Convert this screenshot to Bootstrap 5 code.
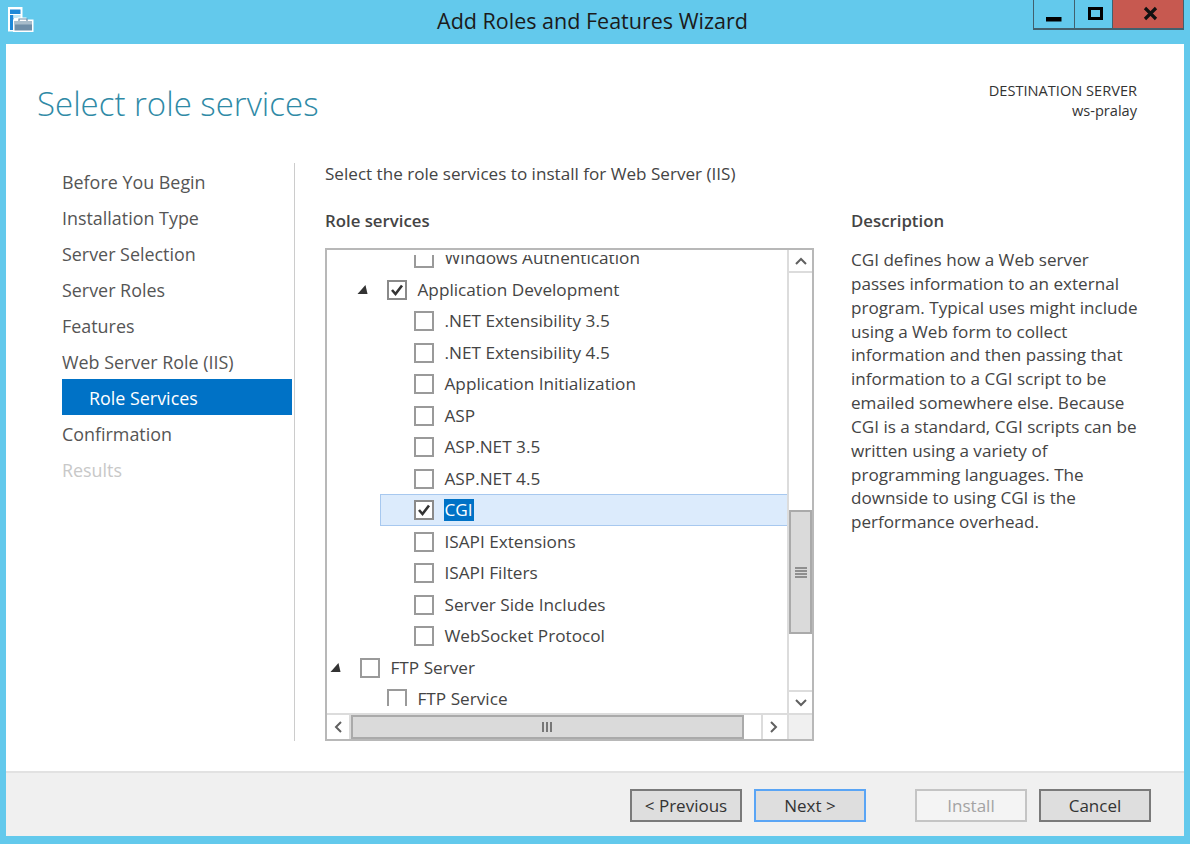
<!DOCTYPE html>
<html lang="en">
<head>
<meta charset="utf-8">
<title>Add Roles and Features Wizard</title>
<link href="https://cdn.jsdelivr.net/npm/bootstrap@5.3.0/dist/css/bootstrap.min.css" rel="stylesheet">
<style>
html,body{height:844px;overflow:hidden}
body{background:#63c9ec;font-family:"Open Sans","Noto Sans","Liberation Sans",sans-serif;font-size:17px;color:#444;}
.wiz{width:1190px;height:844px;padding:0 6px 8px}
.tbar{height:44px;margin:0 -6px;padding-left:8px}
.ticon{width:26px;height:26px;margin-top:7px;flex:none}
.ttl{flex:1;padding-left:118px;text-align:center;font-size:21.5px;color:#1b1b1b;line-height:42px}
.wctl{width:151px;height:30px;margin-right:6px;border:solid #41606e;border-width:0 1px 2px 1px;flex:none}
.wb{display:flex;align-items:center;justify-content:center;height:100%;background:transparent}
.wmin{width:41px;border-right:1px solid #41606e;padding-top:3px}
.wmax{width:38px;border-right:1px solid #41606e;padding-left:5px}
.wcls{flex:1;background:#c75950;padding-left:6px}
.panel{height:792px;background:#fff}
.phead{height:119px;padding:0 47px 0 31px}
.ptitle{font-size:33px;font-weight:300;color:#2f8aa6;margin:41px 0 0;line-height:38px}
.dest{font-size:14.6px;line-height:20px;color:#333;text-align:right;padding-top:36px}
.pbody{height:578px}
.side{width:289px;height:578px;border-right:1px solid #ccc;padding:0 2px 0 56px;flex:none}
.sitem{height:36px;line-height:39px;color:#555;font-size:17.9px;padding:0;white-space:nowrap}
.sitem.on{background:#0072c6;color:#fff;padding-left:27px;line-height:38px}
.sitem.off{color:#c8c8c8}
.mainc{padding-left:30px;flex:1}
.intro{line-height:22px;color:#444;font-size:17.1px;white-space:nowrap}
.hd{font-size:16.8px;font-weight:600;color:#444;line-height:22px;margin:25px 0 16px}
.tcol{width:489px;flex:none}
.tree{height:493px;border:2px solid #b8b8b8;display:grid;grid-template-columns:460px 1fr;grid-template-rows:1fr 26px}
.tvwrap{padding:5px 0 7px;overflow:hidden;min-height:0}
.tview{height:100%;overflow:hidden}
.trows{margin-top:-12.750px}
.trow{height:31.5px;display:flex;align-items:center;white-space:nowrap;color:#444;font-size:17.2px}
.l1{padding-left:33px}.l2{padding-left:60px}.l3{padding-left:87px}
.arrow{width:0;height:0;border-left:5px solid transparent;border-right:5px solid transparent;border-bottom:9px solid #333;margin-left:-28px;margin-right:18px;transform:skewX(-18deg);flex:none}
.form-check-input.tchk{width:20px;height:20px;margin:0 10.500px 0 0;border:2px solid #9a9a9a;border-radius:0;background-color:#fff;flex:none;opacity:1}
.form-check-input.tchk:checked{background-color:#fff;border-color:#8a8a8a;background-image:url("data:image/svg+xml,%3csvg xmlns='http://www.w3.org/2000/svg' viewBox='0 0 16 16'%3e%3cpath fill='none' stroke='%23333' stroke-width='2.6' d='M3 8 6.500 12 13 3.500'/%3e%3c/svg%3e");background-size:100% 100%}
.trow.sel{margin-left:53px;padding-left:33px;height:31.5px;background:#dcebfc;border:solid #a7c8ef;border-width:1px 0 1px 1px}
.seltx{background:#0072c6;color:#fff;padding:0 1px;margin-left:-1px;line-height:22px}
.vsb{border-left:2px solid #dcdcdc;display:flex;flex-direction:column;background:#fff}
.sbtn{display:flex;align-items:center;justify-content:center;background:#fff;flex:none}
.vsb .sbtn{height:23px}
.vup{border-bottom:2px solid #dcdcdc}
.vdn{border-top:2px solid #dcdcdc}
.vtrk{flex:1;padding-top:237px;min-height:0}
.vthumb{height:124px;background:#dadada;border:2px solid #aaa;display:flex;align-items:center;justify-content:center}
.hsb{border-top:2px solid #dcdcdc;display:flex;background:#fff;height:26px;padding-right:2px}
.hsb .sbtn{width:24px}
.hl{border-right:2px solid #dcdcdc}
.hr{border-left:2px solid #dcdcdc}
.htrk{flex:1;min-width:0;display:flex}
.hthumb{width:393px;background:#dadada;border:2px solid #aaa;display:flex;align-items:center;justify-content:center}
.corner{background:#f0f0f0;border-top:2px solid #dcdcdc;border-left:2px solid #dcdcdc}
.dcol{padding-left:37px}
.desc{line-height:23.850px;color:#444;font-size:17.100px;white-space:nowrap}
.foot{height:65px;background:#f0f0f0;border-top:2px solid #e2e2e2;margin-top:30px;padding:16px 33px 0 0}
.wbtn{width:112px;height:33px;padding:0;border-radius:0;border:2px solid #7a7a7a;background:#dedede;color:#333;font-size:17px;line-height:28px}
.wbtn:hover{background:#dedede;border-color:#7a7a7a;color:#333}
.wbtn.nx{border-color:#5aa5f5;margin-left:12px;margin-right:49px}
.wbtn.nx:hover{border-color:#5aa5f5}
.wbtn.ins,.wbtn.ins:disabled{background:#f4f4f4;border-color:#c4c4c4;color:#a3a3a3;opacity:1;margin-right:12px}
</style>
</head>
<body>
<div class="wiz d-flex flex-column">
  <div class="tbar d-flex">
    <svg class="ticon" viewBox="0 0 26 26">
      <path d="M0 0h14.500v24.500H0z" fill="#fff"/>
      <path d="M2 2.500h10.500v4.500H2z" fill="#1e88d8"/>
      <path d="M2 8h3.500v15H2z" fill="#1e88d8"/>
      <path d="M5.500 8h7v3h-7z" fill="#bfe6f6"/>
      <path d="M5 12.500h4.500v-2h9v2H25.500V25H5z" fill="#fff"/>
      <path d="M6.500 14h17.500v9.500H6.500z" fill="#6f8ea8"/>
      <path d="M6.500 14h17.500v3.500H6.500z" fill="#a8bccb"/>
      <path d="M11 14v-2h8v2" fill="none" stroke="#6f8ea8" stroke-width="1.200"/>
    </svg>
    <div class="ttl">Add Roles and Features Wizard</div>
    <div class="wctl d-flex">
      <div class="wb wmin"><svg width="16" height="16" viewBox="0 0 16 16"><path d="M0 9h15.500v4.500H0z" fill="#000"/></svg></div>
      <div class="wb wmax"><svg width="16" height="16" viewBox="0 0 16 16"><path d="M1.500 2.500h12v10h-12z" fill="none" stroke="#000" stroke-width="3"/></svg></div>
      <div class="wb wcls"><svg width="16" height="16" viewBox="0 0 16 16"><path d="M2 2l11 11M13 2 2 13" fill="none" stroke="#111" stroke-width="3.200"/></svg></div>
    </div>
  </div>
  <div class="panel d-flex flex-column">
    <div class="phead d-flex justify-content-between">
      <h1 class="ptitle">Select role services</h1>
      <div class="dest">DESTINATION SERVER<br>ws-pralay</div>
    </div>
    <div class="pbody d-flex">
      <nav class="side">
        <div class="sitem">Before You Begin</div>
        <div class="sitem">Installation Type</div>
        <div class="sitem">Server Selection</div>
        <div class="sitem">Server Roles</div>
        <div class="sitem">Features</div>
        <div class="sitem">Web Server Role (IIS)</div>
        <div class="sitem on">Role Services</div>
        <div class="sitem">Confirmation</div>
        <div class="sitem off">Results</div>
      </nav>
      <div class="mainc">
        <div class="intro">Select the role services to install for Web Server (IIS)</div>
        <div class="d-flex gap-0">
          <div class="tcol">
            <div class="hd">Role services</div>
            <div class="tree">
              <div class="tvwrap"><div class="tview"><div class="trows">
                <div class="trow l3"><input class="form-check-input tchk" type="checkbox">Windows Authentication</div>
                <div class="trow l2"><span class="arrow"></span><input class="form-check-input tchk" type="checkbox" checked>Application Development</div>
                <div class="trow l3"><input class="form-check-input tchk" type="checkbox">.NET Extensibility 3.5</div>
                <div class="trow l3"><input class="form-check-input tchk" type="checkbox">.NET Extensibility 4.5</div>
                <div class="trow l3"><input class="form-check-input tchk" type="checkbox">Application Initialization</div>
                <div class="trow l3"><input class="form-check-input tchk" type="checkbox">ASP</div>
                <div class="trow l3"><input class="form-check-input tchk" type="checkbox">ASP.NET 3.5</div>
                <div class="trow l3"><input class="form-check-input tchk" type="checkbox">ASP.NET 4.5</div>
                <div class="trow sel"><input class="form-check-input tchk" type="checkbox" checked><span class="seltx">CGI</span></div>
                <div class="trow l3"><input class="form-check-input tchk" type="checkbox">ISAPI Extensions</div>
                <div class="trow l3"><input class="form-check-input tchk" type="checkbox">ISAPI Filters</div>
                <div class="trow l3"><input class="form-check-input tchk" type="checkbox">Server Side Includes</div>
                <div class="trow l3"><input class="form-check-input tchk" type="checkbox">WebSocket Protocol</div>
                <div class="trow l1"><span class="arrow"></span><input class="form-check-input tchk" type="checkbox">FTP Server</div>
                <div class="trow l2"><input class="form-check-input tchk" type="checkbox">FTP Service</div>
              </div></div></div>
              <div class="vsb">
                <div class="sbtn vup"><svg width="14" height="10" viewBox="0 0 14 10"><path d="M2 8l5-5 5 5" fill="none" stroke="#606060" stroke-width="2"/></svg></div>
                <div class="vtrk"><div class="vthumb"><svg width="12" height="13" viewBox="0 0 12 13"><path d="M0 2h12M0 5h12M0 8h12M0 11h12" stroke="#777" stroke-width="1.500"/></svg></div></div>
                <div class="sbtn vdn"><svg width="14" height="10" viewBox="0 0 14 10"><path d="M2 2l5 5 5-5" fill="none" stroke="#606060" stroke-width="2"/></svg></div>
              </div>
              <div class="hsb">
                <div class="sbtn hl"><svg width="10" height="14" viewBox="0 0 10 14"><path d="M8 2 3 7l5 5" fill="none" stroke="#606060" stroke-width="2"/></svg></div>
                <div class="htrk"><div class="hthumb"><svg width="13" height="12" viewBox="0 0 13 12"><path d="M2 1v10M6 1v10M10 1v10" stroke="#777" stroke-width="2"/></svg></div></div>
                <div class="sbtn hr"><svg width="10" height="14" viewBox="0 0 10 14"><path d="M2 2l5 5-5 5" fill="none" stroke="#606060" stroke-width="2"/></svg></div>
              </div>
              <div class="corner"></div>
            </div>
          </div>
          <div class="flex-grow-1 dcol">
            <div class="hd">Description</div>
            <div class="desc">CGI defines how a Web server<br>passes information to an external<br>program. Typical uses might include<br>using a Web form to collect<br>information and then passing that<br>information to a CGI script to be<br>emailed somewhere else. Because<br>CGI is a standard, CGI scripts can be<br>written using a variety of<br>programming languages. The<br>downside to using CGI is the<br>performance overhead.</div>
          </div>
        </div>
      </div>
    </div>
    <div class="foot d-flex justify-content-end align-items-start">
      <button type="button" class="btn wbtn">&lt; Previous</button>
      <button type="button" class="btn wbtn nx">Next &gt;</button>
      <button type="button" class="btn wbtn ins" disabled>Install</button>
      <button type="button" class="btn wbtn">Cancel</button>
    </div>
  </div>
</div>
</body>
</html>
